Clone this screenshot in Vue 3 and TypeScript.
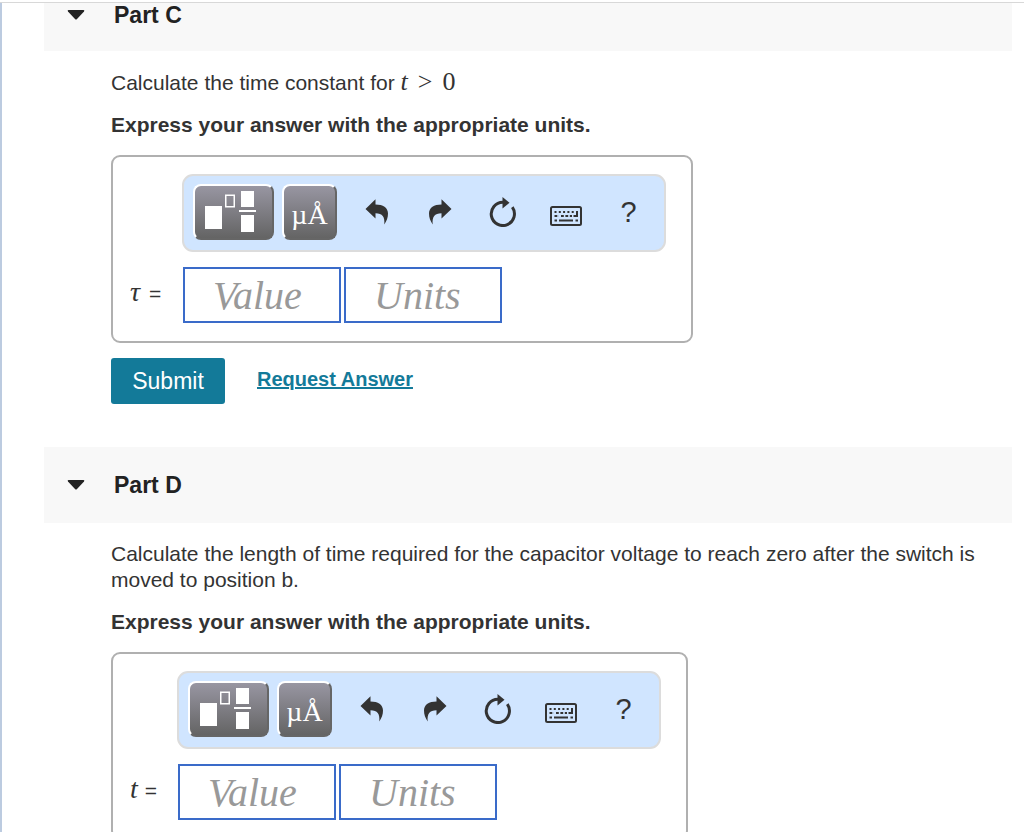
<script setup lang="ts">
import { reactive } from 'vue'

interface Part {
  id: string
  title: string
  question: string
  condition?: string[]
  symbol: string
  open: boolean
  value: string
  units: string
}

const instruction = 'Express your answer with the appropriate units.'

const parts = reactive<Part[]>([
  {
    id: 'c',
    title: 'Part C',
    question: 'Calculate the time constant for',
    condition: ['t', '>', '0'],
    symbol: 'τ',
    open: true,
    value: '',
    units: '',
  },
  {
    id: 'd',
    title: 'Part D',
    question:
      'Calculate the length of time required for the capacitor voltage to reach zero after the switch is moved to position b.',
    symbol: 't',
    open: true,
    value: '',
    units: '',
  },
])

function reset(part: Part) {
  part.value = ''
  part.units = ''
}
</script>

<template>
  <main class="page">
    <section v-for="part in parts" :key="part.id" class="part">
      <h2 class="part-header">
        <button
          class="toggle"
          type="button"
          :aria-expanded="part.open"
          @click="part.open = !part.open"
        >
          <svg class="caret" viewBox="0 0 18 10" aria-hidden="true">
            <path d="M1.5 0H16.5Q18 .4 17 1.6L10 9Q9 10 8 9L1 1.6Q0 .4 1.5 0Z" fill="#222" />
          </svg>
          <span>{{ part.title }}</span>
        </button>
      </h2>

      <form v-if="part.open" class="part-body" @submit.prevent>
        <p class="question">
          {{ part.question }}
          <span v-if="part.condition" class="math">
            <i>{{ part.condition[0] }}</i>
            <span>{{ part.condition[1] }}</span>
            <span>{{ part.condition[2] }}</span>
          </span>
        </p>
        <p class="instruction">{{ instruction }}</p>

        <div class="answer">
          <div class="toolbar" role="toolbar" aria-label="Equation tools">
            <button class="key key-wide" type="button" aria-label="Templates">
              <svg class="templates" viewBox="0 0 52 42" aria-hidden="true">
                <g fill="#fff">
                  <rect x="0" y="16" width="17" height="23" />
                  <rect x="36" y="1" width="13" height="16" />
                  <rect x="34" y="20" width="17" height="2" />
                  <rect x="36" y="25" width="13" height="17" />
                </g>
                <rect x="20.75" y="5.25" width="8.5" height="11.5" fill="none" stroke="#fff" stroke-width="1.5" />
              </svg>
            </button>
            <button class="key key-units" type="button" aria-label="Symbols">µÅ</button>
            <div class="tools">
              <button class="tool" type="button" aria-label="Undo">
                <svg class="arrow" viewBox="0 0 24 26" aria-hidden="true">
                  <path d="M.5 10 10.5.3V5.5C18 5.5 23 8.7 23 14.5 23 18.5 21.7 22 19.3 25.5 20 18 17.5 14.3 10.5 14.3V19.5Z" fill="#333" />
                </svg>
              </button>
              <button class="tool" type="button" aria-label="Redo">
                <svg class="arrow" viewBox="0 0 24 26" aria-hidden="true">
                  <path d="M23.5 10 13.5.3V5.5C6 5.5 1 8.7 1 14.5 1 18.5 2.3 22 4.7 25.5 4 18 6.5 14.3 13.5 14.3V19.5Z" fill="#333" />
                </svg>
              </button>
              <button class="tool" type="button" aria-label="Reset" @click="reset(part)">
                <svg class="refresh" viewBox="0 0 28 30" aria-hidden="true">
                  <path d="M23.3 10.2A11.6 11.6 0 1 1 14 5.3" fill="none" stroke="#333" stroke-width="3" />
                  <path d="M13.5 0 20.5 5.7 13.5 11.4Z" fill="#333" />
                </svg>
              </button>
              <button class="tool tool-low" type="button" aria-label="Keyboard shortcuts">
                <svg class="keyboard" viewBox="0 0 32 20" aria-hidden="true">
                  <rect x="1" y="1" width="30" height="18" rx="1.5" fill="none" stroke="#333" stroke-width="2" />
                  <g fill="none" stroke="#333" stroke-width="2">
                    <path d="M4.5 6H24" stroke-dasharray="2 2.3" />
                    <path d="M4.5 10H9M11 10H22" stroke-dasharray="2.8 1.6" />
                    <path d="M27 5V10H23.5" />
                    <path d="M4.5 14.5H7M9 14.5H23M25.5 14.5H28" />
                  </g>
                </svg>
              </button>
              <button class="tool help" type="button" aria-label="Help">?</button>
            </div>
          </div>

          <label class="symbol" :class="'symbol-' + part.id" :for="'value-' + part.id">
            <i>{{ part.symbol }}</i>
            <span>=</span>
          </label>
          <div class="fields">
            <input :id="'value-' + part.id" v-model="part.value" class="field" type="text" placeholder="Value" />
            <input v-model="part.units" class="field" type="text" placeholder="Units" aria-label="Units" />
          </div>
        </div>

        <div class="actions">
          <button class="submit" type="submit">Submit</button>
          <a class="request" href="#">Request Answer</a>
        </div>
      </form>
    </section>
  </main>
</template>

<style>
html {
  scrollbar-width: none;
}

body {
  margin: 0;
  background: #fff;
}
</style>

<style scoped>
* {
  box-sizing: border-box;
}

.page {
  min-height: 100vh;
  padding: 0 12px 0 42px;
  border-left: 2px solid #bccbe0;
  font-family: 'Liberation Sans', Arial, Helvetica, sans-serif;
  font-size: 21px;
  line-height: 26px;
  color: #333;
}

.page::before {
  content: '';
  display: block;
  height: 3px;
  margin: 0 -12px 0 -44px;
  position: relative;
  background: linear-gradient(#fff 0 2px, #d8d8d8 2px);
}

button {
  margin: 0;
  padding: 0;
  border: 0;
  background: none;
  font: inherit;
  color: inherit;
  cursor: pointer;
}

.part-header {
  display: flex;
  align-items: center;
  height: 76px;
  margin: 0;
  background: #f8f8f8;
  font-size: 23px;
  line-height: 24px;
  color: #222;
}

.part:first-child .part-header {
  height: 48px;
  align-items: flex-start;
}

.toggle {
  display: flex;
  align-items: center;
  gap: 29px;
  padding-left: 23px;
  font-weight: bold;
}

.caret {
  width: 18px;
  height: 10px;
}

.part-body {
  padding: 18px 0 43px 67px;
}

p {
  margin: 0;
}

.math {
  display: inline-flex;
  gap: 10px;
  font-family: 'Liberation Serif', 'Times New Roman', serif;
  font-size: 26px;
}

.instruction {
  margin: 16px 0 17px;
  font-weight: bold;
}

.answer {
  display: inline-grid;
  grid-template-columns: auto auto;
  row-gap: 15px;
  align-items: center;
  vertical-align: top;
  padding: 17px 25px 18px 17px;
  border: 2px solid #b0b0b0;
  border-radius: 9px;
}

.toolbar {
  grid-column: 2;
  display: flex;
  align-items: center;
  height: 78px;
  padding: 0 4px 2px 9px;
  border: 2px solid #dcdcdc;
  border-radius: 11px;
  background: #d0e5ff;
}

.key {
  display: flex;
  align-items: center;
  justify-content: center;
  width: 55px;
  height: 56px;
  margin-right: 8px;
  border: 2px solid;
  border-color: #fff #666 #666 #fff;
  border-radius: 8px;
  background: linear-gradient(#9896a2, #646464);
  font-family: 'Liberation Serif', 'Times New Roman', serif;
  font-size: 28px;
  color: #fff;
}

.key-wide {
  width: 81px;
  padding: 0 5px 3px 0;
}

.key-units {
  padding-top: 5px;
}

.templates {
  width: 52px;
  height: 42px;
}

.tools {
  display: flex;
}

.tool {
  display: flex;
  align-items: center;
  justify-content: center;
  width: 63px;
  height: 56px;
}

.tool-low {
  padding-top: 8px;
}

.arrow {
  width: 24px;
  height: 26px;
}

.refresh {
  width: 28px;
  height: 30px;
}

.keyboard {
  width: 32px;
  height: 20px;
}

.help {
  font-size: 29px;
}

.symbol {
  grid-column: 1;
  display: flex;
  align-items: baseline;
  gap: 9px;
  width: 52px;
  padding-bottom: 4px;
  font-size: 21px;
}

.symbol-d {
  width: 47px;
  gap: 7px;
}

.symbol i {
  font-family: 'Liberation Serif', 'Times New Roman', serif;
  font-size: 28px;
}

.fields {
  display: flex;
  gap: 3px;
  padding-left: 1px;
}

.field {
  width: 158px;
  height: 56px;
  padding: 0 8px 0 28px;
  border: 2px solid #3a6bc9;
  border-radius: 0;
  background: #fff;
  font-family: 'Liberation Serif', 'Times New Roman', serif;
  font-size: 40px;
  font-style: italic;
  color: #333;
}

.field::placeholder {
  color: #999;
  opacity: 1;
}

.actions {
  display: flex;
  align-items: center;
  gap: 32px;
  margin-top: 15px;
}

.submit {
  width: 114px;
  height: 46px;
  border-radius: 3px;
  background: #137a99;
  font-size: 23px;
  color: #fff;
}

.request {
  padding-bottom: 4px;
  font-size: 20px;
  font-weight: bold;
  color: #137a99;
}
</style>
